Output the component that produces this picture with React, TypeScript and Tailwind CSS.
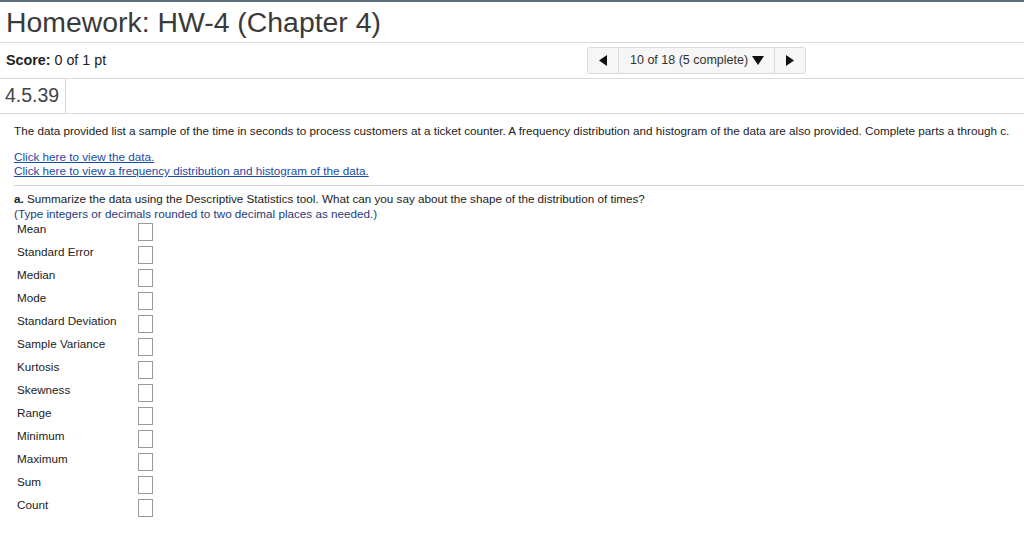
const ROWS = [
  "Mean",
  "Standard Error",
  "Median",
  "Mode",
  "Standard Deviation",
  "Sample Variance",
  "Kurtosis",
  "Skewness",
  "Range",
  "Minimum",
  "Maximum",
  "Sum",
  "Count",
];

function Tri({ dir }: { dir: "left" | "right" | "down" }) {
  if (dir === "down") {
    return (
      <svg width="12" height="9" viewBox="0 0 12 9">
        <path d="M0 0 L12 0 L6 9 Z" fill="#111" />
      </svg>
    );
  }
  return (
    <svg width="8" height="11" viewBox="0 0 8 11">
      <path d={dir === "left" ? "M8 0 L8 11 L0 5.5 Z" : "M0 0 L0 11 L8 5.5 Z"} fill="#111" />
    </svg>
  );
}

export default function App() {
  return (
    <div className="w-[1024px] h-[546px] overflow-hidden bg-white border-t-2 border-[#5d6c7a] font-['Liberation_Sans',Arial,sans-serif] text-[#222]">
      <div className="h-[41px] border-b border-[#dcdcdc] pl-[6px] flex items-center text-[28.4px] text-[#3a3a3a]">
        Homework: HW-4 (Chapter 4)
      </div>

      <div className="h-[36px] border-b border-[#d8d8d8] flex items-center">
        <div className="w-[587px] pl-[6px] text-[14.3px] text-[#222]">
          <span className="font-bold">Score:</span> 0 of 1 pt
        </div>
        <div className="flex h-[27px] border border-[#dadada] rounded-[3px] bg-[#f6f6f6]">
          <div className="w-[30px] flex items-center justify-center">
            <Tri dir="left" />
          </div>
          <div className="w-[157px] border-l border-r border-[#dadada] flex items-center pl-[11px] gap-[4px] text-[12.5px] text-[#333]">
            10 of 18 (5 complete)
            <Tri dir="down" />
          </div>
          <div className="w-[30px] flex items-center justify-center">
            <Tri dir="right" />
          </div>
        </div>
      </div>

      <div className="h-[35px] border-b border-[#d8d8d8] flex">
        <div className="w-[66px] border-r border-[#d8d8d8] pl-[5px] flex items-center text-[19.5px] text-[#444]">
          4.5.39
        </div>
      </div>

      <div className="pl-[14px] text-[11.7px]">
        <p className="pt-[10px] leading-[14px]">
          The data provided list a sample of the time in seconds to process customers at a ticket counter. A frequency distribution and histogram of the data are also provided. Complete parts a through c.
        </p>
        <div className="mt-[12px] leading-[14px] text-[#1d4aa6]">
          <div className="underline">Click here to view the data.</div>
          <div className="underline">Click here to view a frequency distribution and histogram of the data.</div>
        </div>
        <div className="mt-[7px] border-t border-[#d0d0d0]" />
        <div className="pt-[5px] leading-[15px]">
          <div>
            <span className="font-bold">a.</span> Summarize the data using the Descriptive Statistics tool. What can you say about the shape of the distribution of times?
          </div>
          <div className="text-[#1f3a7c]">(Type integers or decimals rounded to two decimal places as needed.)</div>
        </div>
        <div className="-mt-[1px]">
          {ROWS.map((r) => (
            <div key={r} className="h-[23px] flex items-start">
              <div className="w-[124px] pl-[3px] pt-[2px] leading-[14px]">{r}</div>
              <div className="mt-[3px] w-[15px] h-[18px] border border-[#9a9a9a]" />
            </div>
          ))}
        </div>
      </div>
    </div>
  );
}
